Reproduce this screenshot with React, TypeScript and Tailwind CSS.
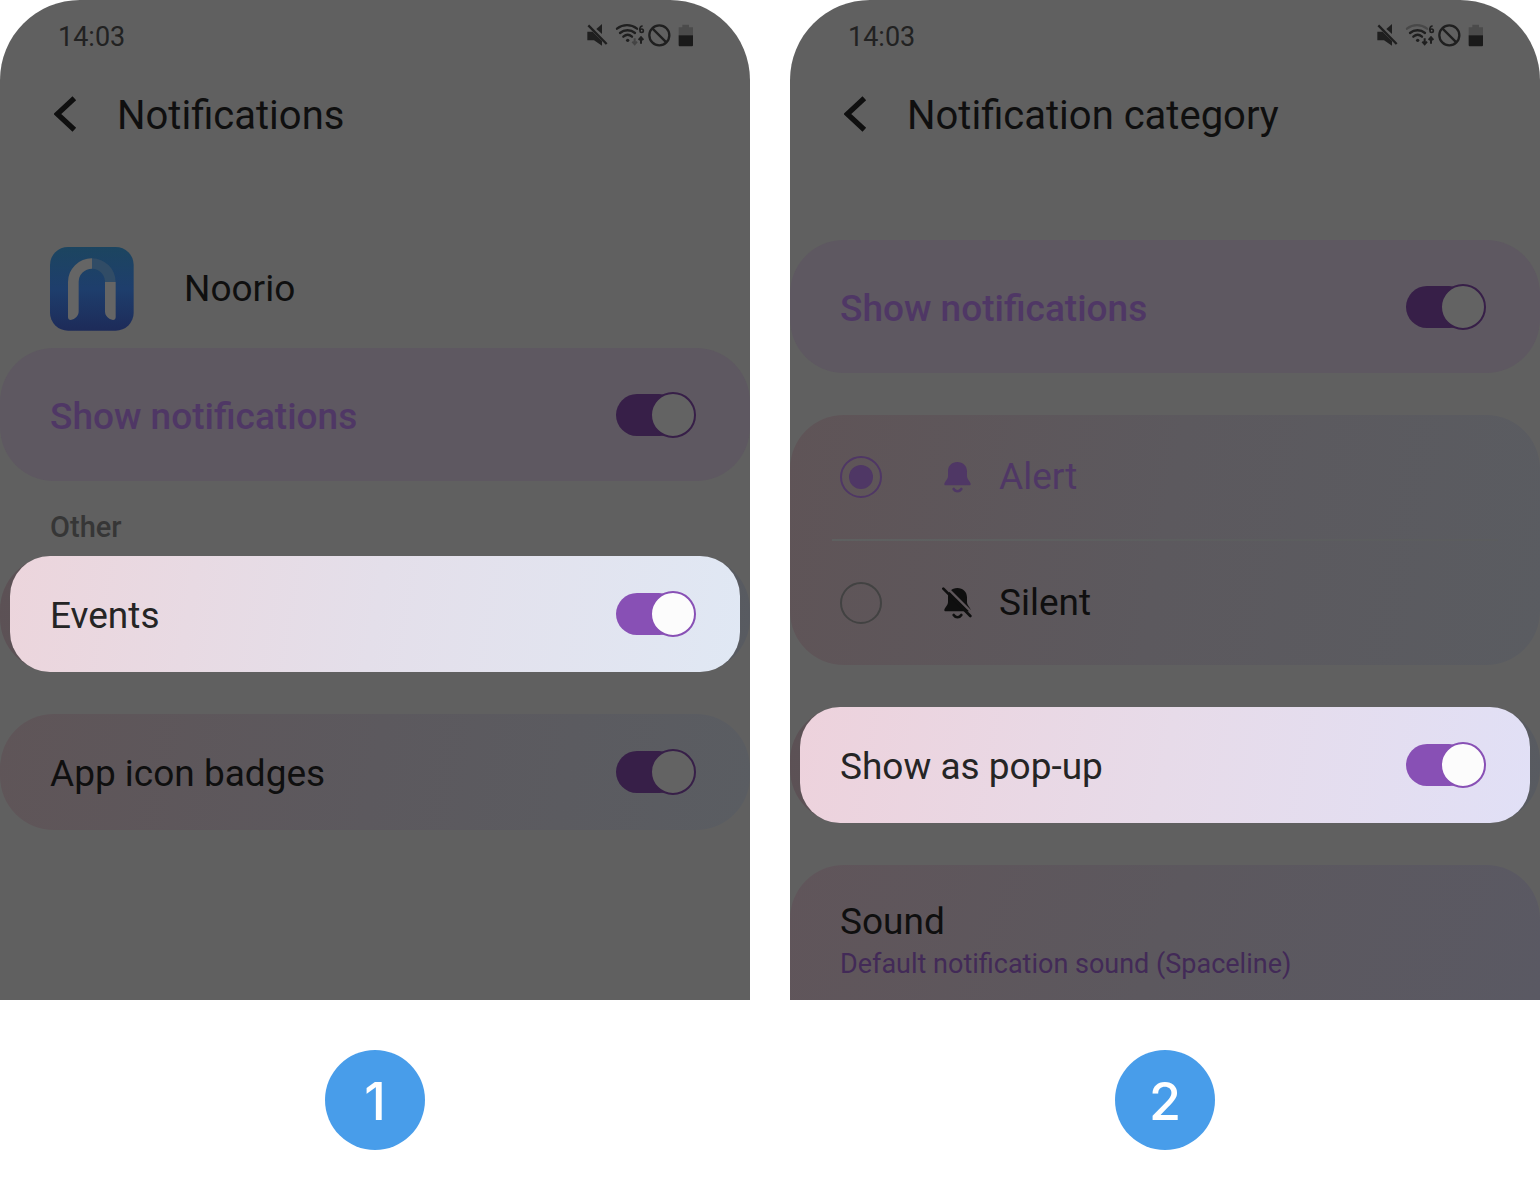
import { useState } from "react";
import type { ReactNode } from "react";
import clsx from "clsx";

function StatusIcons({ weakSignal }: { weakSignal?: boolean }) {
  return (
    <svg viewBox="50 38 321 72" className="h-6 w-[107px]" fill="none" aria-hidden="true">
      {/* muted speaker */}
      <path d="M51 64h16l28 28v14L71 90H51z" fill="#1f1f1f" />
      <path d="M78 56l17-15v30z" fill="#1f1f1f" />
      <path d="M54 45l55 56" stroke="#1f1f1f" strokeWidth="7" />
      {/* wifi */}
      <g stroke="#1f1f1f" strokeWidth="7" strokeLinecap="round">
        <path d="M140 55c18-14 42-14 60 0" stroke={weakSignal ? "#484848" : "#1f1f1f"} />
        <path d="M149 68c13-11 32-11 45 0" />
        <path d="M159 79c8-7 18-7 26 0" />
      </g>
      <circle cx="172" cy="90" r="5" fill="#1f1f1f" />
      <path d="M217 47c-6 0-9 5-9 13" stroke="#1f1f1f" strokeWidth="5" />
      <circle cx="214" cy="61" r="5" stroke="#1f1f1f" strokeWidth="5" />
      <path d="M193 84v17m-7-7l7 8 7-8" stroke={weakSignal ? "#1f1f1f" : "#444444"} strokeWidth="6" />
      <path d="M212 100V82m-7 7l7-8 7 8" stroke="#1f1f1f" strokeWidth="6" />
      {/* do not disturb */}
      <circle cx="267" cy="75" r="30" stroke="#1f1f1f" strokeWidth="7" />
      <path d="M246 54l42 42" stroke="#1f1f1f" strokeWidth="7" />
      {/* battery */}
      <path d="M336 43h20v8h12v24h-43V51h11z" fill="#4b4b4b" />
      <path d="M325 75h43v30a3 3 0 0 1-3 3h-37a3 3 0 0 1-3-3z" fill="#1a1a1a" />
    </svg>
  );
}

function NoorioLogo() {
  return (
    <svg viewBox="60 51 252 252" className="size-[84px]" aria-hidden="true">
      <defs>
        <linearGradient id="noorio" x1="0" y1="0" x2="0" y2="1">
          <stop offset="0" stopColor="#1c4560" />
          <stop offset="0.5" stopColor="#1e3e6c" />
          <stop offset="1" stopColor="#1d2b59" />
        </linearGradient>
      </defs>
      <rect x="60" y="51" width="251" height="251" rx="54" fill="url(#noorio)" />
      <path
        d="M186 85a71 71 0 0 0-72 71v106c0 5 3 8 8 8 14-2 24-12 24-26v-88a40 40 0 0 1 40-40z"
        fill="#656565"
      />
      <path d="M186 85a71 71 0 0 1 71 71h-32a40 40 0 0 0-39-40z" fill="#314c66" />
      <path d="M225 156h32v106c0 5-3 8-8 8-14-2-24-12-24-26z" fill="#656565" />
    </svg>
  );
}

function BellIcon({ off }: { off?: boolean }) {
  return (
    <svg viewBox="366 62 90 102" className="h-[34px] w-[30px] shrink-0" aria-hidden="true">
      <path
        d="M412 68c-17 0-28 12-28 28v15c0 9-11 17-11 24 0 2 1 3 3 3h73c2 0 3-1 3-3 0-7-11-15-11-24V96c0-16-12-28-29-28z"
        fill="currentColor"
      />
      <path d="M401 149c6 9 17 9 23 0" stroke="currentColor" strokeWidth="8" strokeLinecap="round" fill="none" />
      {off && (
        <>
          <path d="M377 63l84 84" stroke="#5e565a" strokeWidth="7" />
          <path d="M370 70l81 82" stroke="currentColor" strokeWidth="8" strokeLinecap="round" />
        </>
      )}
    </svg>
  );
}

function Toggle({ bright }: { bright?: boolean }) {
  const [on, setOn] = useState(true);
  return (
    <input
      type="checkbox"
      role="switch"
      checked={on}
      onChange={() => setOn(!on)}
      className={clsx(
        "relative h-[46px] w-20 shrink-0 appearance-none",
        "before:absolute before:top-[2px] before:left-0 before:h-[42px] before:w-[64px] before:rounded-full",
        "after:absolute after:top-0 after:left-0 after:size-[46px] after:rounded-full after:border-2 checked:after:left-[34px]",
        bright
          ? "before:bg-[#8850b5] after:border-[#8850b5] after:bg-[#fcfcfc]"
          : "before:bg-[#371f48] after:border-[#371f48] after:bg-[#636363]"
      )}
    />
  );
}

function Row({ label, accent }: { label: string; accent?: boolean }) {
  return (
    <label
      className={clsx(
        "flex items-center justify-between rounded-[54px] pr-[54px] pl-[50px]",
        accent
          ? "h-[133px] bg-[#5e5861] font-medium text-[#4f3765]"
          : "h-[116px] bg-linear-100 from-[#5f5558] via-[#5c595e] to-[#5a5d62] text-[#0f0f0f]"
      )}
    >
      <span className="pt-1">{label}</span>
      <Toggle />
    </label>
  );
}

function HighlightRow({ label, lilac }: { label: string; lilac?: boolean }) {
  return (
    <div className="rounded-[54px] bg-linear-100 from-[#5c5155] to-[#585b61] px-[10px]">
      <label
        className={clsx(
          "flex h-[116px] items-center justify-between rounded-[40px] bg-linear-100 pr-[44px] pl-10 text-[#252525]",
          lilac
            ? "from-[#edd2dc] via-[#e7dbe9] to-[#e1e0f6]"
            : "from-[#ecd5dc] via-[#e4dfea] to-[#e0e8f4]"
        )}
      >
        <span className="pt-1">{label}</span>
        <Toggle bright />
      </label>
    </div>
  );
}

function RadioRow({
  label,
  off,
  checked,
  onChange,
}: {
  label: string;
  off?: boolean;
  checked: boolean;
  onChange: () => void;
}) {
  return (
    <label className={clsx("flex h-[124px] items-center pl-[50px]", checked ? "text-[#4f3765]" : "text-[#0f0f0f]")}>
      <input
        type="radio"
        name="category"
        checked={checked}
        onChange={onChange}
        className="grid size-[42px] shrink-0 appearance-none place-items-center rounded-full border-2 border-[#424242] checked:border-[#4f3765] checked:before:size-6 checked:before:rounded-full checked:before:bg-[#4f3765]"
      />
      <span className="ml-[60px]">
        <BellIcon off={off} />
      </span>
      <span className="ml-[27px]">{label}</span>
    </label>
  );
}

function Step({
  number,
  title,
  weakSignal,
  children,
}: {
  number: number;
  title: string;
  weakSignal?: boolean;
  children: ReactNode;
}) {
  return (
    <section className="flex flex-col items-center">
      <div className="flex min-h-[1000px] w-full flex-col overflow-hidden rounded-t-[80px] bg-[#606060] text-[37px] leading-[44px]">
        <div className="flex h-[72px] items-center justify-between pr-14 pl-[58px] text-[27px] text-[#222222]">
          <time className="pt-[2px]">14:03</time>
          <span className="pb-[2px]">
            <StatusIcons weakSignal={weakSignal} />
          </span>
        </div>
        <header className="flex h-[84px] items-center pl-[54px] text-[#0f0f0f]">
          <button type="button" aria-label="Back">
            <svg viewBox="72 256 69 108" className="h-9 w-[23px]" fill="none" aria-hidden="true">
              <path d="M133 263L82 310l51 47" stroke="currentColor" strokeWidth="16" />
            </svg>
          </button>
          <h1 className="ml-10 pt-1 text-[40px]">{title}</h1>
        </header>
        {children}
      </div>
      <div className="mt-[50px] grid size-[100px] place-items-center rounded-full bg-[#489dea] pt-1 font-['Inter',sans-serif] text-[52px] font-medium text-white">
        {number}
      </div>
    </section>
  );
}

export default function App() {
  const [category, setCategory] = useState("alert");

  return (
    <main className="grid min-h-screen grid-cols-2 gap-10 bg-white pb-[50px] font-['Roboto',sans-serif]">
      <Step number={1} title="Notifications">
        <div className="mt-[91px] mb-[17px] flex items-center gap-[50px] pl-[50px] text-[#0f0f0f]">
          <NoorioLogo />
          <span>Noorio</span>
        </div>
        <Row label="Show notifications" accent />
        <h2 className="mt-6 mb-[7px] pl-[50px] text-[29px] font-medium text-[#363636]">Other</h2>
        <HighlightRow label="Events" />
        <div className="mt-[42px]">
          <Row label="App icon badges" />
        </div>
      </Step>

      <Step number={2} title="Notification category" weakSignal>
        <div className="mt-[84px] flex flex-1 flex-col gap-[42px]">
          <Row label="Show notifications" accent />
          <div className="rounded-[54px] bg-linear-100 from-[#5f5457] via-[#5c595e] to-[#5a5c61]">
            <RadioRow label="Alert" checked={category === "alert"} onChange={() => setCategory("alert")} />
            <div className="mx-[42px] h-[2px] bg-linear-to-r from-[#5e6060] to-[#5b5c5e]" />
            <RadioRow label="Silent" off checked={category === "silent"} onChange={() => setCategory("silent")} />
          </div>
          <HighlightRow label="Show as pop-up" lilac />
          <div className="flex-1 rounded-t-[54px] bg-linear-110 from-[#60555a] via-[#5c585e] to-[#5a5963] pt-[35px] pl-[50px]">
            <h2 className="text-[#0f0f0f]">Sound</h2>
            <p className="text-[27px] leading-10 text-[#422a57]">Default notification sound (Spaceline)</p>
          </div>
        </div>
      </Step>
    </main>
  );
}
